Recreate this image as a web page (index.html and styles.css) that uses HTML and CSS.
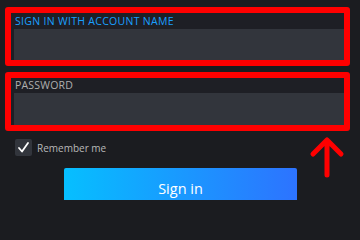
FILE: index.html
```html
<!DOCTYPE html>
<html>
<head>
<meta charset="utf-8">
<link rel="stylesheet" href="styles.css">
</head>
<body>
<div class="page">
  <div class="form">
    <div class="annot">
      <div class="label label-blue">SIGN IN WITH ACCOUNT NAME</div>
      <div class="input"></div>
    </div>
    <div class="annot annot-2">
      <div class="label label-grey">PASSWORD</div>
      <div class="input"></div>
    </div>
    <label class="remember">
      <span class="check">
        <svg width="13" height="13" viewBox="0 0 13 13"><path d="M2 7 L5 10.5 L11 2" fill="none" stroke="#fff" stroke-width="1.8" stroke-linecap="round" stroke-linejoin="round"/></svg>
      </span>
      <span class="remember-text">Remember me</span>
    </label>
    <div class="btn-row">
      <button class="signin">Sign in</button>
    </div>
  </div>
  <svg class="arrow" width="40" height="42" viewBox="0 0 40 42">
    <path d="M19 39 V5 M5 18 L19 4 L33 18" fill="none" stroke="#ff0000" stroke-width="5" stroke-linecap="round" stroke-linejoin="round"/>
  </svg>
</div>
</body>
</html>
```
FILE: styles.css
```css
html, body {
  margin: 0;
  padding: 0;
  background: #1b1c20;
}
.page {
  position: relative;
  width: 360px;
  height: 200px;
  overflow: hidden;
  font-family: "Open Sans", "Liberation Sans", sans-serif;
}
.form {
  display: flex;
  flex-direction: column;
  padding: 7px 10px 0 5px;
}
.annot {
  border: 6px solid #ff0000;
  border-radius: 3px;
  background: #1e1f25;
  display: flex;
  flex-direction: column;
}
.annot-2 {
  margin-top: 6px;
}
.label {
  height: 16px;
  line-height: 16px;
  padding-left: 4px;
  font-size: 10.5px;
  letter-spacing: 0.3px;
}
.label-blue {
  color: #1a9fff;
}
.label-grey {
  color: #afafaf;
  height: 15px;
  line-height: 14px;
  letter-spacing: 0.2px;
}
.input {
  height: 31px;
  margin-left: 3px;
  background: #32353c;
}
.annot-2 .input {
  height: 32px;
}
.remember {
  display: flex;
  align-items: center;
  gap: 5px;
  margin-top: 8px;
  padding-left: 10px;
}
.check {
  width: 17px;
  height: 17px;
  background: #32353c;
  border-radius: 2px;
  display: flex;
  align-items: center;
  justify-content: center;
}
.remember-text {
  color: #b8b8b8;
  font-size: 10px;
}
.btn-row {
  display: flex;
  margin-top: 12px;
  padding-left: 59px;
}
.signin {
  width: 233px;
  height: 44px;
  border: none;
  border-radius: 2px;
  background: linear-gradient(90deg, #06bfff 0%, #2d73ff 100%);
  color: #ffffff;
  font-family: "Open Sans", "Liberation Sans", sans-serif;
  font-size: 14.5px;
  padding: 0 0 4px 0;
}
.arrow {
  position: absolute;
  left: 308px;
  top: 136px;
}
```
